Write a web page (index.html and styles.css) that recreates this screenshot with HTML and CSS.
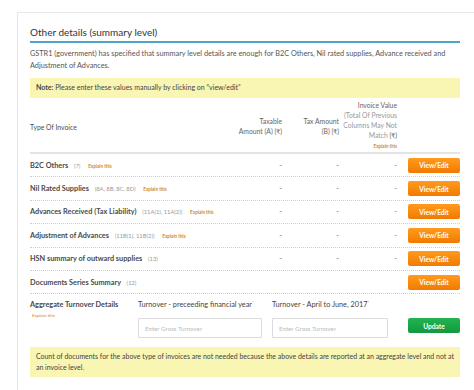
FILE: index.html
```html
<!DOCTYPE html>
<html lang="en">
<head>
    <meta charset="UTF-8">
    <meta name="viewport" content="width=device-width, initial-scale=1.0">
    <title>Other details (summary level)</title>
    <link rel="stylesheet" href="styles.css">
</head>
<body>
    <div class="card">
        <h2 class="title">Other details (summary level)</h2>
        <p class="intro">GSTR1 (government) has specified that summary level details are enough for B2C Others, Nil rated supplies, Advance received and Adjustment of Advances.</p>
        <div class="note"><b>Note:</b> Please enter these values manually by clicking on “view/edit”</div>

        <div class="table">
            <div class="row head">
                <div class="c-type">Type Of Invoice</div>
                <div class="c-num">Taxable<br>Amount (A) (₹)</div>
                <div class="c-num">Tax Amount<br>(B) (₹)</div>
                <div class="c-num inv">Invoice Value<br><span class="muted">(Total Of Previous<br>Columns May Not<br>Match</span> (₹)<br><span class="explain">Explain this</span></div>
                <div></div>
            </div>

            <div class="row">
                <div class="c-type">B2C Others <span class="code">(7)</span> <span class="explain">Explain this</span></div>
                <div class="c-num">-</div><div class="c-num">-</div><div class="c-num">-</div>
                <div class="c-btn"><button class="btn-edit">View/Edit</button></div>
            </div>
            <div class="row">
                <div class="c-type">Nil Rated Supplies <span class="code">(8A, 8B, 8C, 8D)</span> <span class="explain">Explain this</span></div>
                <div class="c-num">-</div><div class="c-num">-</div><div class="c-num">-</div>
                <div class="c-btn"><button class="btn-edit">View/Edit</button></div>
            </div>
            <div class="row">
                <div class="c-type">Advances Received (Tax Liability) <span class="code">(11A(1), 11A(2))</span> <span class="explain">Explain this</span></div>
                <div class="c-num">-</div><div class="c-num">-</div><div class="c-num">-</div>
                <div class="c-btn"><button class="btn-edit">View/Edit</button></div>
            </div>
            <div class="row">
                <div class="c-type">Adjustment of Advances <span class="code">(11B(1), 11B(2))</span> <span class="explain">Explain this</span></div>
                <div class="c-num">-</div><div class="c-num">-</div><div class="c-num">-</div>
                <div class="c-btn"><button class="btn-edit">View/Edit</button></div>
            </div>
            <div class="row">
                <div class="c-type">HSN summary of outward supplies <span class="code">(13)</span></div>
                <div class="c-num">-</div><div class="c-num">-</div><div class="c-num">-</div>
                <div class="c-btn"><button class="btn-edit">View/Edit</button></div>
            </div>
            <div class="row">
                <div class="c-type">Documents Series Summary <span class="code">(12)</span></div>
                <div class="c-num"></div><div class="c-num"></div><div class="c-num"></div>
                <div class="c-btn"><button class="btn-edit">View/Edit</button></div>
            </div>
        </div>

        <div class="turnover">
            <div class="t-label">
                Aggregate Turnover Details
                <div class="explain">Explain this</div>
            </div>
            <div class="t-field">
                <label>Turnover - preceeding financial year<sup>*</sup></label>
                <input type="text" placeholder="Enter Gross Turnover">
            </div>
            <div class="t-field">
                <label>Turnover - April to June, 2017<sup>*</sup></label>
                <input type="text" placeholder="Enter Gross Turnover">
            </div>
            <div class="t-btn"><button class="btn-update">Update</button></div>
        </div>

        <div class="note bottom">Count of documents for the above type of invoices are not needed because the above details are reported at an aggregate level and not at an invoice level.</div>
    </div>
</body>
</html>
```

FILE: styles.css
```css
html, body { overflow: hidden; }
body { font-family: Lato, "Open Sans", sans-serif; background: #fff; color: #444; margin: 0; }
.card { margin: 12px 0 0 17px; width: 458px; border: 1px solid #e8e8e8; border-right: none; padding: 0 15px 0 12px; box-sizing: border-box; height: 400px; }

.title { font-size: 10px; line-height: 12px; font-weight: normal; color: #333; margin: 0; padding: 13px 0 3px; border-bottom: 2px solid #4ea3c8; }
.intro { font-size: 7.3px; line-height: 12px; margin: 5px 0 6px; color: #555; }

.note { background: #f9f5b3; font-size: 7px; color: #444; padding: 5px 6px 6px; line-height: 9px; }
.note b { font-weight: bold; }

/* tabela */
.table { margin-top: 1px; }
.row { display: grid; grid-template-columns: 192px 60px 57px 58px 63px; align-items: center; border-bottom: 1px dotted #cfcfcf; height: 22.4px; font-size: 7.3px; }
.row.head { height: 53px; border-bottom: 2px solid #e4e4e4; font-size: 6.8px; line-height: 10px; color: #555; }
.c-type { font-weight: bold; color: #4a4a4a; white-space: nowrap; }
.head .c-type { font-weight: normal; padding-top: 2px; }
.c-num { text-align: right; color: #666; }
.inv { white-space: nowrap; }
.muted { color: #999; }
.code { font-weight: normal; color: #999; font-size: 5.8px; margin-left: 4px; }
.explain { font-weight: bold; color: #d08c28; font-size: 4.6px; margin-left: 6px; }
.head .explain { margin-left: 0; }
.c-btn { text-align: right; }

.btn-edit { width: 52px; height: 15px; border: none; border-radius: 2px; background: linear-gradient(#ff9b1f, #f27a00); color: #fff; font-family: inherit; font-size: 6.6px; font-weight: bold; padding: 0; }

/* obrót */
.turnover { display: grid; grid-template-columns: 108px 134px 136px 52px; padding-top: 6px; height: 47px; font-size: 7.3px; }
.t-label { font-weight: bold; color: #4a4a4a; line-height: 9px; }
.t-label .explain { margin: 3px 0 0 2px; line-height: 6px; font-weight: normal; }
.t-field label { display: block; color: #444; line-height: 9px; }
.t-field sup { font-size: 4px; line-height: 0; }
.t-field input { display: block; margin-top: 9px; width: 124px; height: 20px; box-sizing: border-box; border: 1px solid #dcdcdc; border-radius: 1px; font-family: inherit; font-size: 6.2px; padding: 0 6px; color: #999; }
.t-field input::placeholder { color: #bbb; }
.t-field + .t-field input { width: 116px; }
.t-btn { padding-top: 18px; }
.btn-update { width: 52px; height: 15px; border: none; border-radius: 2px; background: linear-gradient(#22b352, #119a3e); color: #fff; font-family: inherit; font-size: 6.6px; font-weight: bold; padding: 0; }

.note.bottom { font-size: 6.95px; padding: 4px 2px 4px 6px; line-height: 11px; }
```
